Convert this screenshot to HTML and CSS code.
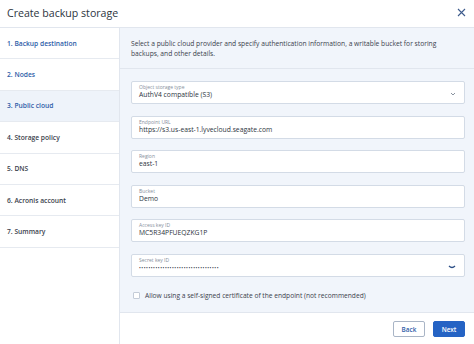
FILE: index.html
```html
<!DOCTYPE html>
<html lang="en">
<head>
    <meta charset="UTF-8">
    <title>Create backup storage</title>
    <link rel="stylesheet" href="styles.css">
</head>
<body>
    <div class="dialog">
        <div class="header">
            <h1>Create backup storage</h1>
            <button class="close-btn" aria-label="Close">
                <svg width="9" height="9" viewBox="0 0 9 9"><path d="M1 1L8 8M8 1L1 8" stroke="#3d5b8c" stroke-width="1.1" fill="none"/></svg>
            </button>
        </div>

        <div class="content">
            <div class="steps">
                <div class="step done">1. Backup destination</div>
                <div class="step done">2. Nodes</div>
                <div class="step active">3. Public cloud</div>
                <div class="step">4. Storage policy</div>
                <div class="step">5. DNS</div>
                <div class="step">6. Acronis account</div>
                <div class="step">7. Summary</div>
            </div>

            <div class="main">
                <div class="panel">
                    <p class="intro">Select a public cloud provider and specify authentication information, a writable bucket for storing backups, and other details.</p>

                    <div class="fields">
                        <div class="field">
                            <div class="field-label">Object storage type</div>
                            <div class="field-value">AuthV4 compatible (S3)</div>
                            <svg class="field-icon" width="6" height="4" viewBox="0 0 6 4"><path d="M1 1L3 3L5 1" stroke="#6b7686" stroke-width="0.8" fill="none"/></svg>
                        </div>
                        <div class="field">
                            <div class="field-label">Endpoint URL</div>
                            <div class="field-value">https://s3.us-east-1.lyvecloud.seagate.com</div>
                        </div>
                        <div class="field">
                            <div class="field-label">Region</div>
                            <div class="field-value">east-1</div>
                        </div>
                        <div class="field">
                            <div class="field-label">Bucket</div>
                            <div class="field-value">Demo</div>
                        </div>
                        <div class="field">
                            <div class="field-label">Access key ID</div>
                            <div class="field-value">MC5R34PFUEQZKG1P</div>
                        </div>
                        <div class="field">
                            <div class="field-label">Secret key ID</div>
                            <div class="field-value secret">••••••••••••••••••••••••••••••••••</div>
                            <svg class="field-icon" width="8" height="4" viewBox="0 0 8 4"><path d="M1 1Q4 4 7 1" stroke="#2b4e86" stroke-width="1.3" fill="none"/></svg>
                        </div>
                    </div>

                    <label class="check">
                        <span class="check-box"></span>
                        Allow using a self-signed certificate of the endpoint (not recommended)
                    </label>
                </div>

                <div class="footer">
                    <button class="btn btn-back">Back</button>
                    <button class="btn btn-next">Next</button>
                </div>
            </div>
        </div>
    </div>
</body>
</html>
```

FILE: styles.css
```css
* {
    margin: 0;
    padding: 0;
    box-sizing: border-box;
}

body {
    font-family: 'Open Sans', 'Liberation Sans', sans-serif;
    background: white;
    color: #333a45;
    width: 474px;
    height: 344px;
    overflow: hidden;
}

.dialog {
    display: flex;
    flex-direction: column;
    height: 344px;
}

.header {
    height: 28px;
    border-bottom: 1px solid #e1e6ee;
    display: flex;
    align-items: center;
    justify-content: space-between;
    padding: 0 8px 2px 7px;
}

.header h1 {
    font-size: 10.6px;
    font-weight: normal;
    color: #2c3440;
}

.close-btn {
    background: none;
    border: none;
    display: flex;
    cursor: pointer;
}

.content {
    flex: 1;
    display: flex;
}

.steps {
    width: 120px;
    border-right: 1px solid #e1e6ee;
}

.step {
    height: 31.4px;
    border-bottom: 1px solid #e6eaf0;
    display: flex;
    align-items: center;
    padding-left: 7px;
    font-size: 6.7px;
    font-weight: 600;
    color: #3a414c;
}

.step.done,
.step.active {
    color: #2e5da8;
}

.step.active {
    background: #eef3fa;
}

.main {
    flex: 1;
    display: flex;
    flex-direction: column;
}

.panel {
    background: #f1f5fb;
    height: 285px;
    border-bottom: 1px solid #e1e6ee;
}

.intro {
    font-size: 6.7px;
    line-height: 10px;
    color: #3a414c;
    padding: 11px 16px 9px 11px;
    border-bottom: 1px solid #e1e6ee;
}

.fields {
    display: flex;
    flex-direction: column;
    gap: 11.5px;
    padding: 12px 9px 0 11px;
}

.field {
    position: relative;
    height: 23px;
    background: #fff;
    border: 1px solid #d3dbe6;
    border-radius: 2px;
    padding: 2px 7px 0 7px;
}

.field-label {
    font-size: 5px;
    line-height: 6px;
    color: #858e9b;
}

.field-value {
    font-size: 6.75px;
    line-height: 10px;
    color: #2c3440;
}

.field-value.secret {
    font-size: 4.8px;
    letter-spacing: 0.55px;
}

.field-icon {
    position: absolute;
    right: 8px;
    top: 10px;
}

.check {
    display: flex;
    align-items: center;
    gap: 5px;
    font-size: 6.65px;
    color: #3a414c;
    padding: 14px 0 0 13px;
}

.check-box {
    width: 7px;
    height: 7px;
    border: 1px solid #c4ccd8;
    border-radius: 1px;
    background: #fff;
}

.footer {
    flex: 1;
    display: flex;
    justify-content: flex-end;
    align-items: flex-start;
    gap: 8px;
    padding: 8px 9px 0 0;
}

.btn {
    width: 32px;
    height: 16px;
    font-family: inherit;
    font-size: 6.4px;
    font-weight: 600;
    border-radius: 2px;
    cursor: pointer;
}

.btn-back {
    background: #fff;
    border: 1px solid #a9b5c6;
    color: #2e5da8;
}

.btn-next {
    background: #2563c4;
    border: 1px solid #2563c4;
    color: #fff;
}
```
